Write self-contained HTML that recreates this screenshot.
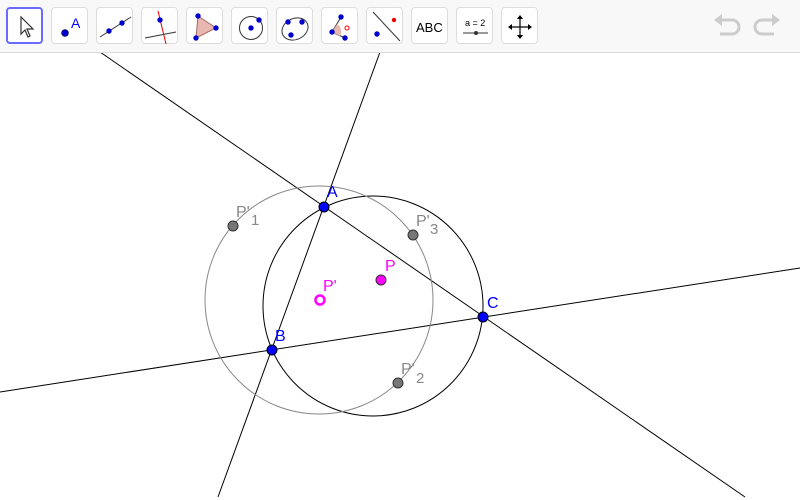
<!DOCTYPE html>
<html><head><meta charset="utf-8"><style>
html,body{margin:0;padding:0;width:800px;height:500px;overflow:hidden;background:#fff;font-family:"Liberation Sans",sans-serif}
#tb{position:absolute;left:0;top:0;width:800px;height:52px;background:#f8f8f8;border-bottom:1px solid #ddd}
.b{position:absolute;top:7px;width:37px;height:37px;background:#fff;border:1px solid #ddd;border-radius:4px;box-sizing:border-box}
.b svg{position:absolute;left:0;top:0}
#g{position:absolute;left:0;top:0}
</style></head><body>
<svg id="g" width="800" height="500">
<g stroke="#000" stroke-width="1" fill="none">
<line x1="100" y1="52" x2="745" y2="497"/>
<line x1="380" y1="52" x2="218" y2="497"/>
<line x1="0" y1="392" x2="800" y2="268"/>
<circle cx="373" cy="306" r="110"/>
<circle cx="319" cy="300" r="114" stroke="#888"/>
</g>
<g fill="#777" stroke="#333" stroke-width="1">
<circle cx="233" cy="226" r="5"/><circle cx="413" cy="235" r="5"/><circle cx="398" cy="383" r="5"/>
</g>
<circle cx="381" cy="280" r="5" fill="#f0f" stroke="#333"/>
<circle cx="320" cy="300" r="4.5" fill="none" stroke="#f0f" stroke-width="2.5"/>
<g fill="#00f" stroke="#000"><circle cx="324" cy="207" r="5"/><circle cx="272" cy="350" r="5"/><circle cx="483" cy="317" r="5"/></g>
<g font-size="16" fill="#00f"><text x="327" y="197">A</text><text x="275" y="341">B</text><text x="487" y="308">C</text></g>
<g font-size="16" fill="#888"><text x="236" y="217">P'</text><text x="251" y="225" font-size="15">1</text>
<text x="416" y="226">P'</text><text x="430" y="234" font-size="15">3</text>
<text x="401" y="374">P'</text><text x="416" y="383" font-size="15">2</text></g>
<g font-size="16" fill="#f0f"><text x="385" y="271">P</text><text x="323" y="291">P'</text></g>
</svg>
<div id="tb">
<div class="b" style="left:6px;border:2px solid #6a6aff"><svg width="34" height="34"><path d="M13 8 L13 25 L17 21 L20 28 L22 27 L19 20 L25 20 Z" fill="#fff" stroke="#333" stroke-width="1.2"/></svg></div>
<div class="b" style="left:51px"><svg width="37" height="37"><circle cx="13" cy="25" r="3.5" fill="#00c" stroke="#000" stroke-width=".5"/><text x="19" y="20" font-size="14" fill="#00f">A</text></svg></div>
<div class="b" style="left:96px"><svg width="37" height="37"><line x1="3" y1="29" x2="34" y2="9" stroke="#333"/><circle cx="12" cy="23" r="2.7" fill="#00c"/><circle cx="25" cy="15" r="2.7" fill="#00c"/></svg></div>
<div class="b" style="left:141px"><svg width="37" height="37"><line x1="3" y1="30" x2="34" y2="24" stroke="#333"/><line x1="16" y1="3" x2="24" y2="36" stroke="#e00"/><circle cx="18" cy="12" r="2.7" fill="#00c"/></svg></div>
<div class="b" style="left:186px"><svg width="37" height="37"><polygon points="11,8 29,20 9,30" fill="#e8b8b0" stroke="#a66"/><circle cx="11" cy="8" r="2.7" fill="#00c"/><circle cx="29" cy="20" r="2.7" fill="#00c"/><circle cx="9" cy="30" r="2.7" fill="#00c"/></svg></div>
<div class="b" style="left:231px"><svg width="37" height="37"><circle cx="19" cy="20" r="11.5" fill="none" stroke="#333"/><circle cx="19" cy="20" r="2.7" fill="#00c"/><circle cx="27" cy="12" r="2.7" fill="#00c"/></svg></div>
<div class="b" style="left:276px"><svg width="37" height="37"><ellipse cx="18" cy="21" rx="13.5" ry="10.5" transform="rotate(-25 18 21)" fill="none" stroke="#333"/><circle cx="11" cy="14" r="2.7" fill="#00c"/><circle cx="25" cy="14" r="2.7" fill="#00c"/><circle cx="14" cy="27" r="2.7" fill="#00c"/></svg></div>
<div class="b" style="left:321px"><svg width="37" height="37"><path d="M10 24 L19 9 M10 24 L23 30" stroke="#333"/><path d="M10 24 L15 16 A9 9 0 0 1 18 28 Z" fill="#e8b8b0"/><circle cx="19" cy="9" r="2.7" fill="#00c"/><circle cx="10" cy="24" r="2.7" fill="#00c"/><circle cx="23" cy="30" r="2.7" fill="#00c"/><circle cx="25" cy="20" r="2" fill="none" stroke="#e00"/></svg></div>
<div class="b" style="left:366px"><svg width="37" height="37"><line x1="6" y1="4" x2="33" y2="33" stroke="#333"/><circle cx="27" cy="12" r="2.2" fill="#e00"/><circle cx="10" cy="26" r="2.7" fill="#00c"/></svg></div>
<div class="b" style="left:411px"><svg width="37" height="37"><text x="4" y="24" font-size="13" fill="#000">ABC</text></svg></div>
<div class="b" style="left:456px"><svg width="37" height="37"><text x="8" y="18" font-size="9" fill="#000">a = 2</text><line x1="6" y1="25" x2="31" y2="25" stroke="#333"/><circle cx="19" cy="25" r="2" fill="#333"/></svg></div>
<div class="b" style="left:501px"><svg width="37" height="37"><path d="M18 9 V29 M8 19 H28" stroke="#000" stroke-width="1.2"/><path d="M18 7 L15 11 H21Z M18 31 L15 27 H21Z M6 19 L10 16 V22Z M30 19 L26 16 V22Z" fill="#000"/></svg></div>
<svg style="position:absolute;left:712px;top:12px" width="72" height="30"><g fill="none" stroke="#ccc" stroke-width="3"><path d="M6 8 H20 A7 7 0 0 1 20 22 H8"/><path d="M64 8 H50 A7 7 0 0 0 50 22 H62"/></g><path d="M2 8 L10 2 V14Z" fill="#ccc"/><path d="M68 8 L60 2 V14Z" fill="#ccc"/></svg>
</div>
</body></html>
